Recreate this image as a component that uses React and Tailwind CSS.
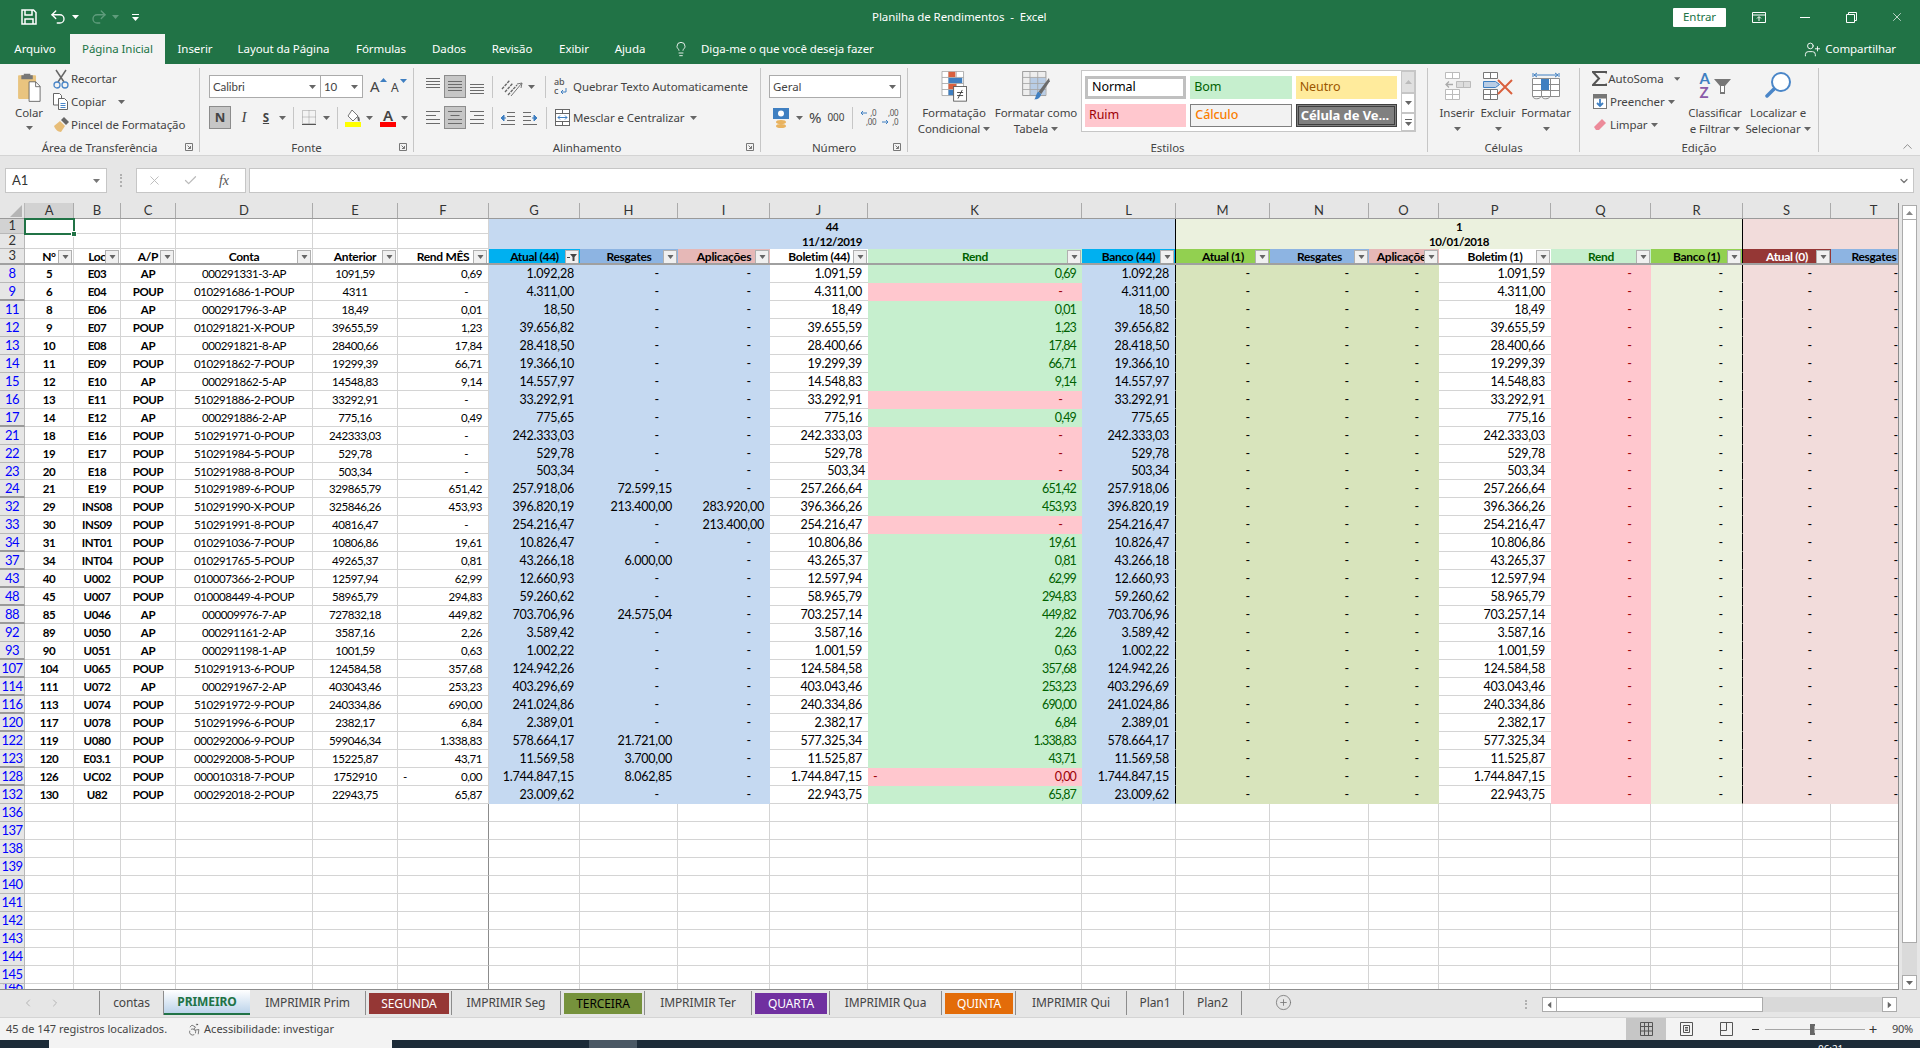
import React from 'react';
import clsx from 'clsx';
import { Undo2, Redo2, Lightbulb, UserPlus, X, Check, ChevronDown, ChevronUp, CirclePlus, Accessibility, ChevronLeft, ChevronRight } from 'lucide-react';

const W = {
  A: 'w-[49px]', B: 'w-[47px]', C: 'w-[55px]', D: 'w-[137px]', E: 'w-[85px]', F: 'w-[91px]',
  G: 'w-[91px]', H: 'w-[98px]', I: 'w-[92px]', J: 'w-[98px]', K: 'w-[214px]', L: 'w-[94px]',
  M: 'w-[94px]', N: 'w-[99px]', O: 'w-[70px]', P: 'w-[112px]', Q: 'w-[100px]', R: 'w-[92px]',
  S: 'w-[88px]', T: 'w-[86px]',
};
const COLS = Object.keys(W);

// row, n, loc, a/p, conta, anterior, rend mes, atual, resgates, aplicacoes, boletim, rend, banco
const DATA = [
  [8, 5, 'E03', 'AP', '000291331-3-AP', '1091,59', '0,69', '1.092,28', '-', '-', '1.091,59', '0,69', '1.092,28'],
  [9, 6, 'E04', 'POUP', '010291686-1-POUP', '4311', '-', '4.311,00', '-', '-', '4.311,00', '-', '4.311,00'],
  [11, 8, 'E06', 'AP', '000291796-3-AP', '18,49', '0,01', '18,50', '-', '-', '18,49', '0,01', '18,50'],
  [12, 9, 'E07', 'POUP', '010291821-X-POUP', '39655,59', '1,23', '39.656,82', '-', '-', '39.655,59', '1,23', '39.656,82'],
  [13, 10, 'E08', 'AP', '000291821-8-AP', '28400,66', '17,84', '28.418,50', '-', '-', '28.400,66', '17,84', '28.418,50'],
  [14, 11, 'E09', 'POUP', '010291862-7-POUP', '19299,39', '66,71', '19.366,10', '-', '-', '19.299,39', '66,71', '19.366,10'],
  [15, 12, 'E10', 'AP', '000291862-5-AP', '14548,83', '9,14', '14.557,97', '-', '-', '14.548,83', '9,14', '14.557,97'],
  [16, 13, 'E11', 'POUP', '510291886-2-POUP', '33292,91', '-', '33.292,91', '-', '-', '33.292,91', '-', '33.292,91'],
  [17, 14, 'E12', 'AP', '000291886-2-AP', '775,16', '0,49', '775,65', '-', '-', '775,16', '0,49', '775,65'],
  [21, 18, 'E16', 'POUP', '510291971-0-POUP', '242333,03', '-', '242.333,03', '-', '-', '242.333,03', '-', '242.333,03'],
  [22, 19, 'E17', 'POUP', '510291984-5-POUP', '529,78', '-', '529,78', '-', '-', '529,78', '-', '529,78'],
  [23, 20, 'E18', 'POUP', '510291988-8-POUP', '503,34', '-', '503,34', '-', '-', '503,34', '-', '503,34'],
  [24, 21, 'E19', 'POUP', '510291989-6-POUP', '329865,79', '651,42', '257.918,06', '72.599,15', '-', '257.266,64', '651,42', '257.918,06'],
  [32, 29, 'INS08', 'POUP', '510291990-X-POUP', '325846,26', '453,93', '396.820,19', '213.400,00', '283.920,00', '396.366,26', '453,93', '396.820,19'],
  [33, 30, 'INS09', 'POUP', '510291991-8-POUP', '40816,47', '-', '254.216,47', '-', '213.400,00', '254.216,47', '-', '254.216,47'],
  [34, 31, 'INT01', 'POUP', '010291036-7-POUP', '10806,86', '19,61', '10.826,47', '-', '-', '10.806,86', '19,61', '10.826,47'],
  [37, 34, 'INT04', 'POUP', '010291765-5-POUP', '49265,37', '0,81', '43.266,18', '6.000,00', '-', '43.265,37', '0,81', '43.266,18'],
  [43, 40, 'U002', 'POUP', '010007366-2-POUP', '12597,94', '62,99', '12.660,93', '-', '-', '12.597,94', '62,99', '12.660,93'],
  [48, 45, 'U007', 'POUP', '010008449-4-POUP', '58965,79', '294,83', '59.260,62', '-', '-', '58.965,79', '294,83', '59.260,62'],
  [88, 85, 'U046', 'AP', '000009976-7-AP', '727832,18', '449,82', '703.706,96', '24.575,04', '-', '703.257,14', '449,82', '703.706,96'],
  [92, 89, 'U050', 'AP', '000291161-2-AP', '3587,16', '2,26', '3.589,42', '-', '-', '3.587,16', '2,26', '3.589,42'],
  [93, 90, 'U051', 'AP', '000291198-1-AP', '1001,59', '0,63', '1.002,22', '-', '-', '1.001,59', '0,63', '1.002,22'],
  [107, 104, 'U065', 'POUP', '510291913-6-POUP', '124584,58', '357,68', '124.942,26', '-', '-', '124.584,58', '357,68', '124.942,26'],
  [114, 111, 'U072', 'AP', '000291967-2-AP', '403043,46', '253,23', '403.296,69', '-', '-', '403.043,46', '253,23', '403.296,69'],
  [116, 113, 'U074', 'POUP', '510291972-9-POUP', '240334,86', '690,00', '241.024,86', '-', '-', '240.334,86', '690,00', '241.024,86'],
  [120, 117, 'U078', 'POUP', '510291996-6-POUP', '2382,17', '6,84', '2.389,01', '-', '-', '2.382,17', '6,84', '2.389,01'],
  [122, 119, 'U080', 'POUP', '000292006-9-POUP', '599046,34', '1.338,83', '578.664,17', '21.721,00', '-', '577.325,34', '1.338,83', '578.664,17'],
  [123, 120, 'E03.1', 'POUP', '000292008-5-POUP', '15225,87', '43,71', '11.569,58', '3.700,00', '-', '11.525,87', '43,71', '11.569,58'],
  [128, 126, 'UC02', 'POUP', '000010318-7-POUP', '1752910', '0,00', '1.744.847,15', '8.062,85', '-', '1.744.847,15', '0,00', '1.744.847,15'],
  [132, 130, 'U82', 'POUP', '000292018-2-POUP', '22943,75', '65,87', '23.009,62', '-', '-', '22.943,75', '65,87', '23.009,62'],
];

const HEADERS = [
  ['A', 'N°', 'bg-white border-r border-[#d4d4d4] text-black'],
  ['B', 'Loc', 'bg-white border-r border-[#d4d4d4] text-black'],
  ['C', 'A/P', 'bg-white border-r border-[#d4d4d4] text-black'],
  ['D', 'Conta', 'bg-white border-r border-[#d4d4d4] text-black'],
  ['E', 'Anterior', 'bg-white border-r border-[#d4d4d4] text-black'],
  ['F', 'Rend MÊS', 'bg-white border-r border-[#d4d4d4] text-black'],
  ['G', 'Atual (44)', 'bg-[#00b0f0] text-black'],
  ['H', 'Resgates', 'bg-[#8db4e2] text-black'],
  ['I', 'Aplicações', 'bg-[#e6b8b7] text-black'],
  ['J', 'Boletim (44)', 'bg-white text-black'],
  ['K', 'Rend', 'bg-[#c6efce] text-[#006100]'],
  ['L', 'Banco (44)', 'bg-[#00b0f0] text-black border-r border-black'],
  ['M', 'Atual (1)', 'bg-[#92d050] text-black'],
  ['N', 'Resgates', 'bg-[#8db4e2] text-black'],
  ['O', 'Aplicações', 'bg-[#e6b8b7] text-black'],
  ['P', 'Boletim (1)', 'bg-white text-black'],
  ['Q', 'Rend', 'bg-[#c6efce] text-[#006100]'],
  ['R', 'Banco (1)', 'bg-[#92d050] text-black border-r border-black'],
  ['S', 'Atual (0)', 'bg-[#953735] text-white'],
  ['T', 'Resgates', 'bg-[#8db4e2] text-black'],
];

const cellFont = "font-['Lato',sans-serif] text-[12.5px] tracking-[-0.22px] text-black";
const smallFont = "font-['Lato',sans-serif] text-[11.5px] tracking-[-0.42px] text-black";
const rendFont = "font-['Lato',sans-serif] text-[12.5px] tracking-[-0.85px]";

const Caret = ({ className, fill = '#666' }) => (
  <svg width="7" height="4" viewBox="0 0 7 4" className={className}><path d="M0 0h7L3.5 4z" fill={fill} /></svg>
);

const Launcher = () => (
  <svg width="8" height="8" viewBox="0 0 8 8" className="absolute right-[6px] bottom-[1px]" fill="none" stroke="#777">
    <path d="M.5 7.5v-7h7v7z" /><path d="M2.5 2.5l3 3M3 5.5h2.5V3" />
  </svg>
);

const Group = ({ className, label, launcher, children }) => (
  <div className={clsx('relative h-[84px] mt-[4px] shrink-0 border-r border-[#c6c6c6] flex flex-col', className)}>
    <div className="h-[75px]">{children}</div>
    <div className="h-[9px] leading-[9px] text-center">{label}</div>
    {launcher && <Launcher />}
  </div>
);

// ribbon icons
const SaveIcon = () => (
  <svg width="16" height="16" viewBox="0 0 16 16" fill="none" stroke="#fff" strokeWidth="1.5">
    <path d="M1 1h11.5L15 3.5V15H1z" /><path d="M4 1v5h7V1" /><path d="M4 15v-5h8v5" />
  </svg>
);
const PasteIcon = () => (
  <svg width="29" height="31" viewBox="0 0 30 38">
    <rect x="1" y="4" width="22" height="29" rx="1" fill="#e9c47f" />
    <path d="M8 4V2h8v2h3v5H5V4z" fill="#777" />
    <path d="M14.5 12h8l5.5 5.500V36H14.500z" fill="#fff" stroke="#555" />
    <path d="M22.500 12v6h5.500" fill="none" stroke="#555" />
  </svg>
);
const ScissorsIcon = () => (
  <svg width="16" height="20" viewBox="0 0 16 20" fill="none">
    <path d="M3 1l8 12M13 1L5 13" stroke="#666" strokeWidth="1.5" />
    <circle cx="4" cy="16" r="3" stroke="#4a86c8" strokeWidth="1.3" />
    <circle cx="12" cy="16" r="3" stroke="#4a86c8" strokeWidth="1.3" />
  </svg>
);
const CopyIcon = () => (
  <svg width="16" height="17" viewBox="0 0 16 17" fill="#fff" stroke="#666">
    <path d="M.5.500h6l2 2V12H.500z" /><path d="M5.500 5.500h6l3 3v8h-9z" />
    <path d="M7.500 10.500h5M7.500 12.500h5M7.500 14.500h5" stroke="#4a86c8" />
  </svg>
);
const PainterIcon = () => (
  <svg width="17" height="17" viewBox="0 0 17 17">
    <path d="M7 5l5 5-4 6c-3 0-6-3-7-6z" fill="#e7bd78" />
    <path d="M8 4l5 5 3-3-5-5z" fill="#666" />
  </svg>
);
const AlignRows = ({ widths = [14, 14, 14], align = 'left', gap = 2 }) => (
  <svg width="16" height={gap * 2 + 12} viewBox={`0 0 16 ${gap * 2 + 12}`} stroke="#6b6b6b">
    {[0, 1, 2, 3].map(i => {
      const w = widths[i % 3];
      const x = align === 'left' ? 1 : align === 'right' ? 15 - w : 8 - w / 2;
      return <path key={i} d={`M${x} ${i * (gap + 2) + 1.5}h${w}`} />;
    })}
  </svg>
);
const FillIcon = () => (
  <div className="flex flex-col items-center w-[16px]">
    <svg width="14" height="14" viewBox="0 0 14 14" fill="none" stroke="#777"><path d="M6 1l6 6-5 5-5-5z" fill="#fff" /><path d="M12 8c1 2 1 3 .5 4" stroke="#666" strokeWidth="2" /></svg>
    <div className="w-[16px] h-[5px] bg-[#ffff00] -mt-[1px]" />
  </div>
);
const BordersIcon = () => (
  <svg width="14" height="15" viewBox="0 0 14 15" fill="none" stroke="#999" strokeDasharray="1 1">
    <path d="M.5.500h13v13h-13zM7 .500v13M.500 7h13" /><path d="M0 14.500h14" stroke="#555" strokeDasharray="none" />
  </svg>
);
const WrapIcon = () => (
  <div className="relative w-[15px] h-[20px] text-[9px] leading-[9px] text-[#555] font-medium">
    <div>ab</div>
    <div>c</div>
    <svg width="8" height="8" viewBox="0 0 8 8" className="absolute left-[6px] top-[10px]" fill="none" stroke="#3f7fc1"><path d="M6 1v4H1M3 3L1 5l2 2" /></svg>
  </div>
);
const MergeIcon = () => (
  <svg width="15" height="17" viewBox="0 0 15 17" fill="#fff" stroke="#666">
    <rect x=".5" y=".5" width="14" height="16" /><path d="M.500 4.500h14M.500 12.500h14M7.500.500v4M7.500 12.500v4" />
    <path d="M3 8.500h9M3 8.500l2-2M3 8.500l2 2M12 8.500l-2-2M12 8.500l-2 2" stroke="#3f7fc1" fill="none" />
  </svg>
);
const OrientIcon = () => (
  <svg width="24" height="20" viewBox="0 0 24 20" fill="none" stroke="#666">
    <path d="M2 12l8-9M5 15l8-9M8 18l9-10" strokeWidth="1.300" strokeDasharray="3 1" />
    <path d="M11 19L22 6M22 6l-5 1M22 6l-1 5" stroke="#777" />
  </svg>
);
const IndentIcon = ({ flip }) => (
  <svg width="16" height="16" viewBox="0 0 16 16" fill="none" className={flip ? '-scale-x-100' : ''}>
    <path d="M7 2.500h8M7 6.500h8M7 10.500h8M1 14.500h14" stroke="#6b6b6b" />
    <path d="M1 8h5M1 8l3-3v6z" stroke="#3f7fc1" fill="#3f7fc1" />
  </svg>
);
const CurrencyIcon = () => (
  <svg width="18" height="22" viewBox="0 0 18 22">
    <rect x="1" y="1" width="16" height="11" fill="#3f7fc1" />
    <circle cx="9" cy="6.500" r="3" fill="#fff" />
    <ellipse cx="9" cy="15" rx="5" ry="2" fill="#e9b35f" />
    <ellipse cx="9" cy="19" rx="5" ry="2" fill="#e9b35f" />
  </svg>
);
const DecIcon = ({ top, bottom, flip }) => (
  <div className="relative w-[16px] h-[20px] text-[8px] leading-[9px] text-[#555] text-right tracking-[-0.3px]">
    <div>{top}</div>
    <div>{bottom}</div>
    <svg width="7" height="6" viewBox="0 0 7 6" className={clsx('absolute left-0', flip ? 'top-[11px] -scale-x-100' : 'top-[2px]')} fill="none" stroke="#3f7fc1"><path d="M7 3H1M3 1L1 3l2 2" /></svg>
  </div>
);
const CondIcon = () => (
  <svg width="27" height="31" viewBox="0 0 30 36">
    <path d="M.5.5h25v28h-25zM.5 7.500h25M.5 14.500h25M.5 21.500h25M8.500.500v28M17 .500v28" fill="#fff" stroke="#a6a6a6" />
    <rect x="8" y="1" width="8" height="6" fill="#d9603e" />
    <rect x="8" y="8" width="16" height="6" fill="#3f7fc1" />
    <rect x="8" y="15" width="9" height="6" fill="#d9603e" />
    <rect x="8" y="22" width="6" height="6" fill="#3f7fc1" />
    <rect x="14" y="18" width="15" height="17" fill="#fff" stroke="#555" />
    <path d="M18 25h7M18 28.500h7M24 22l-5 10" stroke="#333" fill="none" />
  </svg>
);
const TableIcon = () => (
  <svg width="28" height="31" viewBox="0 0 32 36">
    <path d="M.5.500h27v28h-27z" fill="#eee" stroke="#8c8c8c" />
    <rect x="9" y="8" width="18" height="20" fill="#b9cde5" />
    <path d="M.500 7.500h27M.500 14.500h27M.500 21.500h27M9 .500v28M18 .500v28" stroke="#a6a6a6" fill="none" />
    <path d="M31 8L19 24l3 3L32 12z" fill="#6b6b6b" />
    <path d="M19 24l3 3c-1 5-5 6-8 6 2-2 2-8 5-9z" fill="#3f7fc1" />
  </svg>
);
const InsertIcon = () => (
  <svg width="27" height="30" viewBox="0 0 27 30" fill="#fff" stroke="#bbb">
    <path d="M1.500 1.500h14v6h-14zM8.500 1.500v6M1.500 18.500h14v10h-14zM1.500 23.500h14M8.500 18.500v10" />
    <path d="M12.500 10.500h14v6h-14zM19.500 10.500v6" fill="#ddd" />
    <path d="M9 13.500H2m3-3l-3 3 3 3" fill="none" stroke="#aaa" strokeWidth="1.300" />
  </svg>
);
const DeleteIcon = () => (
  <svg width="30" height="30" viewBox="0 0 30 30" fill="#fff" stroke="#777">
    <path d="M.500 1.500h14v6h-14zM7.500 1.500v6M.500 18.500h14v10h-14zM.500 23.500h14M7.500 18.500v10" />
    <path d="M.500 10.500h12l4 3-4 3h-12z" fill="#b9cde5" stroke="#3f7fc1" />
    <path d="M15 9l14 14M29 9L15 23" stroke="#d9603e" strokeWidth="2" />
  </svg>
);
const FormatIcon = () => (
  <svg width="28" height="30" viewBox="0 0 28 30" fill="#fff" stroke="#8c8c8c">
    <path d="M.500 7.500h27v18h-27zM.500 13.500h27M.500 19.500h27M9.500 7.500v18M18.500 7.500v18" />
    <rect x="9" y="8" width="8" height="11" fill="#3f7fc1" stroke="none" />
    <path d="M1 2v4M27 2v4M2 4h24M2 4l3-2M2 4l3 2M26 4l-3-2M26 4l-3 2" stroke="#3f7fc1" fill="none" />
    <path d="M1 25.500c0 3 7 3 8 0M10 25.500c0 3 7 3 8 0" fill="none" />
  </svg>
);
const SigmaIcon = () => (
  <svg width="15" height="15" viewBox="0 0 15 15" fill="none" stroke="#555" strokeWidth="2"><path d="M14.500 2.500V1H1l6 6.500L1 14h13.500v-1.500" /></svg>
);
const DownFillIcon = () => (
  <svg width="14" height="15" viewBox="0 0 14 15" fill="#fff" stroke="#777">
    <rect x=".5" y=".5" width="13" height="14" /><rect x="1" y="1" width="12" height="3" fill="#777" />
    <path d="M7 5v7M4 9l3 3 3-3" stroke="#3f7fc1" strokeWidth="1.800" fill="none" />
  </svg>
);
const EraserIcon = () => (
  <svg width="14" height="13" viewBox="0 0 14 13"><path d="M9 1l4 4-7 7H3L1 9z" fill="#ec8a99" /></svg>
);
const SortIcon = () => (
  <div className="relative w-[31px] h-[30px] font-['Lato'] font-bold text-[15px] leading-[14px]">
    <div className="text-[#3f7fc1]">A</div>
    <div className="text-[#8a5aa8]">Z</div>
    <svg width="17" height="15" viewBox="0 0 17 15" className="absolute left-[14px] top-[8px]"><path d="M0 0h17l-6 7v8H6V7z" fill="#777" /><path d="M7 7h3v6H7z" fill="#fff" /></svg>
  </div>
);
const SearchIcon = () => (
  <svg width="27" height="28" viewBox="0 0 27 28" fill="none" stroke="#4a86c8">
    <circle cx="16" cy="11" r="9" strokeWidth="2" fill="#fff" />
    <path d="M9 18l-7 7" strokeWidth="3.500" strokeLinecap="round" />
  </svg>
);

const TOP_TABS = [
  ['Arquivo', 'w-[70px]'], ['Página Inicial', 'w-[95px]'], ['Inserir', 'w-[60px]'], ['Layout da Página', 'w-[117px]'],
  ['Fórmulas', 'w-[78px]'], ['Dados', 'w-[58px]'], ['Revisão', 'w-[68px]'], ['Exibir', 'w-[56px]'], ['Ajuda', 'w-[56px]'],
];

const TitleBar = () => (
  <div className="h-[64px] shrink-0 bg-[#217346] text-white">
    <div className="h-[34px] flex items-center">
      <div className="w-[872px] shrink-0 flex items-center">
        <div className="ml-[21px]"><SaveIcon /></div>
        <Undo2 size={18} strokeWidth={1.800} className="ml-[12px]" />
        <Caret fill="#fff" className="ml-[5px]" />
        <Redo2 size={18} strokeWidth={1.800} className="ml-[11px] text-[#5f9c7c]" />
        <Caret fill="#5f9c7c" className="ml-[4px]" />
        <div className="ml-[13px] flex flex-col items-center gap-[2px]">
          <div className="w-[7px] h-[1px] bg-white" /><Caret fill="#fff" />
        </div>
      </div>
      <div className="whitespace-pre">Planilha de Rendimentos  -  Excel</div>
      <div className="ml-auto w-[53px] h-[19px] bg-white rounded-[1px] text-[#217346] flex items-center justify-center">Entrar</div>
      <svg width="14" height="11" viewBox="0 0 14 11" fill="none" stroke="#fff" className="ml-[26px]"><path d="M.500.500h13v10h-13zM.500 3h13M7 9V5M5 6.500L7 4.500l2 2" /></svg>
      <div className="ml-[34px] w-[10px] h-[1px] bg-white" />
      <svg width="11" height="11" viewBox="0 0 11 11" fill="none" stroke="#fff" className="ml-[36px]"><path d="M.500 2.500h8v8h-8zM2.500 2.500v-2h8v8h-2" /></svg>
      <X size={14} strokeWidth={1.200} className="ml-[33px] mr-[16px]" />
    </div>
    <div className="h-[30px] flex">
      {TOP_TABS.map(([t, w]) => (
        <div key={t} className={clsx(w, 'flex items-center justify-center shrink-0', t === 'Página Inicial' && 'bg-[#f3f3f3] text-[#217346]')}>{t}</div>
      ))}
      <div className="flex items-center ml-[15px]">
        <Lightbulb size={16} strokeWidth={1.300} />
        <span className="ml-[12px]">Diga-me o que você deseja fazer</span>
      </div>
      <div className="ml-auto flex items-center pr-[24px]">
        <UserPlus size={17} strokeWidth={1.300} className="mr-[4px]" />
        Compartilhar
      </div>
    </div>
  </div>
);

const Sep = ({ className }) => <div className={clsx('w-px h-[22px] bg-[#c6c6c6]', className)} />;

const Combo = ({ className, children }) => (
  <div className={clsx('h-[23px] bg-white border border-[#ababab] flex items-center justify-between pl-[3px] pr-[4px]', className)}>
    {children}<Caret />
  </div>
);

const SmallRow = ({ icon, label, caret, caretGap = 'ml-[1px]' }) => (
  <div className="h-[23px] flex items-center whitespace-nowrap">
    <div className="w-[18px] flex justify-center">{icon}</div>
    <span className="ml-[1px]">{label}</span>
    {caret && <Caret className={caretGap} />}
  </div>
);

const BigButton = ({ className, icon, lines, caretInline }) => (
  <div className={clsx('flex flex-col items-center leading-[16px] whitespace-nowrap', className)}>
    <div className="h-[34px] flex items-start justify-center mt-[3px]">{icon}</div>
    {lines.map((l, i) => (
      <div key={l} className="flex items-center">
        {l}{caretInline && i === lines.length - 1 && <Caret className="ml-[3px]" />}
      </div>
    ))}
    {!caretInline && <div className="h-[16px] flex items-center"><Caret /></div>}
  </div>
);

const GalleryCell = ({ className, children }) => (
  <div className={clsx('h-[23px] flex items-center px-[4px] text-[12.5px]', className)}>{children}</div>
);

const Ribbon = () => (
  <div className="relative h-[92px] shrink-0 bg-[#f3f3f3] border-b border-[#d4d4d4] flex text-[#444]">
    <Group className="w-[200px]" label="Área de Transferência" launcher>
      <div className="flex">
        <div className="w-[52px] pl-[6px] flex flex-col items-center leading-[16px]">
          <div className="mt-[4px] h-[33px]"><PasteIcon /></div>
          <div className="h-[16px]">Colar</div>
          <Caret className="mt-[5px]" />
        </div>
        <div className="flex flex-col -mt-[1px]">
          <SmallRow icon={<ScissorsIcon />} label="Recortar" />
          <SmallRow icon={<CopyIcon />} label="Copiar" caret caretGap="ml-[12px]" />
          <SmallRow icon={<PainterIcon />} label="Pincel de Formatação" />
        </div>
      </div>
    </Group>

    <Group className="w-[214px]" label="Fonte" launcher>
      <div className="pt-[7px] pl-[9px]">
        <div className="flex items-center">
          <Combo className="w-[112px] font-['Lato']">Calibri</Combo>
          <Combo className="w-[43px] -ml-px font-['Lato']">10</Combo>
          <div className="ml-[7px] w-[18px] relative text-[15px] leading-none">A<Caret fill="#3f7fc1" className="absolute right-[1px] top-[-1px] rotate-180" /></div>
          <div className="ml-[3px] w-[18px] relative text-[12px] leading-none mt-[2px]">A<Caret fill="#3f7fc1" className="absolute right-[2px] top-[-3px]" /></div>
        </div>
        <div className="flex items-center mt-[8px]">
          <div className="w-[22px] h-[23px] bg-[#c6c6c6] border border-[#8c8c8c] flex items-center justify-center font-bold text-[13px]">N</div>
          <div className="ml-[5px] w-[16px] text-center italic font-['Liberation_Serif'] text-[15px]">I</div>
          <div className="ml-[6px] w-[16px] text-center underline font-bold">S</div>
          <Caret className="ml-[5px]" />
          <Sep className="ml-[7px]" />
          <div className="ml-[8px]"><BordersIcon /></div>
          <Caret className="ml-[7px]" />
          <Sep className="ml-[7px]" />
          <div className="ml-[7px]"><FillIcon /></div>
          <Caret className="ml-[5px]" />
          <div className="ml-[7px] w-[16px] flex flex-col items-center leading-[13px] text-[15px] font-semibold">A<div className="w-[16px] h-[5px] bg-[#ff0000]" /></div>
          <Caret className="ml-[5px]" />
        </div>
      </div>
    </Group>

    <Group className="w-[347px]" label="Alinhamento" launcher>
      <div className="pt-[7px] pl-[11px]">
        <div className="flex items-center h-[23px]">
          <div className="self-start mt-[2px]"><AlignRows widths={[14, 14, 14]} gap={1} /></div>
          <div className="ml-[3px] w-[22px] h-[23px] bg-[#c6c6c6] border border-[#8c8c8c] flex items-center justify-center"><AlignRows gap={1} /></div>
          <div className="ml-[3px] self-end mb-[1px]"><AlignRows gap={1} /></div>
          <Sep className="ml-[7px]" />
          <div className="ml-[7px]"><OrientIcon /></div>
          <Caret className="ml-[4px]" />
          <Sep className="ml-[10px]" />
          <div className="ml-[8px]"><WrapIcon /></div>
          <span className="ml-[4px] whitespace-nowrap">Quebrar Texto Automaticamente</span>
        </div>
        <div className="flex items-center h-[23px] mt-[8px]">
          <AlignRows widths={[14, 10, 14]} />
          <div className="ml-[3px] w-[22px] h-[23px] bg-[#c6c6c6] border border-[#8c8c8c] flex items-center justify-center"><AlignRows widths={[14, 9, 14]} align="center" /></div>
          <div className="ml-[3px]"><AlignRows widths={[14, 10, 14]} align="right" /></div>
          <Sep className="ml-[7px]" />
          <div className="ml-[7px]"><IndentIcon /></div>
          <div className="ml-[6px]"><IndentIcon flip /></div>
          <Sep className="ml-[8px]" />
          <div className="ml-[8px]"><MergeIcon /></div>
          <span className="ml-[3px] whitespace-nowrap">Mesclar e Centralizar</span>
          <Caret className="ml-[6px]" />
        </div>
      </div>
    </Group>

    <Group className="w-[147px]" label="Número" launcher>
      <div className="pt-[7px] pl-[8px]">
        <Combo className="w-[132px]">Geral</Combo>
        <div className="flex items-center h-[23px] mt-[8px]">
          <div className="ml-[3px]"><CurrencyIcon /></div>
          <Caret className="ml-[6px]" />
          <span className="ml-[6px] text-[15px] leading-none">%</span>
          <span className="ml-[6px] text-[10px]">000</span>
          <Sep className="ml-[8px]" />
          <div className="ml-[7px]"><DecIcon top=",0" bottom=",00" /></div>
          <div className="ml-[6px]"><DecIcon top=",00" bottom=",0" flip /></div>
        </div>
      </div>
    </Group>

    <Group className="w-[520px]" label="Estilos">
      <div className="flex">
        <BigButton className="w-[82px] ml-[5px]" icon={<CondIcon />} lines={['Formatação', 'Condicional']} caretInline />
        <BigButton className="w-[82px]" icon={<TableIcon />} lines={['Formatar como', 'Tabela']} caretInline />
        <div className="ml-[4px] mt-[2px] w-[335px] h-[62px] bg-white border border-[#c6c6c6] flex">
          <div className="flex-1 min-w-0 grid grid-cols-3 content-start gap-x-[4px] gap-y-[5px] pt-[5px] pl-[3px] pr-[4px]">
            <GalleryCell className="bg-white text-black outline-[3px] outline-[#c0c0c0] -outline-offset-[3px] px-[7px]">Normal</GalleryCell>
            <GalleryCell className="bg-[#c6efce] text-[#006100]">Bom</GalleryCell>
            <GalleryCell className="bg-[#ffeb9c] text-[#9c5700]">Neutro</GalleryCell>
            <GalleryCell className="bg-[#ffc7ce] text-[#9c0006]">Ruim</GalleryCell>
            <GalleryCell className="bg-[#f2f2f2] border border-[#7f7f7f] text-[#fa7d00] font-medium">Cálculo</GalleryCell>
            <GalleryCell className="border-[3px] border-double border-[#3f3f3f] text-white font-bold !px-[2px] !text-[13px] whitespace-nowrap overflow-hidden bg-[#808080]">Célula de Ve...</GalleryCell>
          </div>
          <div className="w-[14px] shrink-0 flex flex-col">
            <div className="h-[22px] bg-[#e0e0e0] border border-[#c6c6c6] flex items-center justify-center"><Caret fill="#bbb" className="rotate-180" /></div>
            <div className="h-[20px] bg-white border border-[#c6c6c6] flex items-center justify-center"><Caret /></div>
            <div className="h-[18px] bg-white border border-[#c6c6c6] flex flex-col items-center justify-center gap-[2px]"><div className="w-[7px] h-px bg-[#666]" /><Caret /></div>
          </div>
        </div>
      </div>
    </Group>

    <Group className="w-[152px]" label="Células">
      <div className="flex pl-[9px]">
        <BigButton className="w-[40px]" icon={<InsertIcon />} lines={['Inserir']} />
        <BigButton className="w-[42px]" icon={<DeleteIcon />} lines={['Excluir']} />
        <BigButton className="w-[54px]" icon={<FormatIcon />} lines={['Formatar']} />
      </div>
    </Group>

    <Group className="w-[239px]" label="Edição">
      <div className="flex">
        <div className="w-[100px] pl-[11px] flex flex-col -mt-[1px]">
          <SmallRow icon={<SigmaIcon />} label="AutoSoma" caret caretGap="ml-[10px]" />
          <SmallRow icon={<DownFillIcon />} label="Preencher" caret caretGap="ml-[3px]" />
          <SmallRow icon={<EraserIcon />} label="Limpar" caret caretGap="ml-[3px]" />
        </div>
        <BigButton className="w-[70px]" icon={<SortIcon />} lines={['Classificar', 'e Filtrar']} caretInline />
        <BigButton className="w-[56px]" icon={<SearchIcon />} lines={['Localizar e', 'Selecionar']} caretInline />
      </div>
    </Group>

    <ChevronUp size={15} strokeWidth={1} className="absolute right-[5px] bottom-[1px] text-[#555]" />
  </div>
);

const FormulaBar = () => (
  <div className="h-[47px] shrink-0 bg-[#e6e6e6] flex items-center pt-[2px]">
    <div className="ml-[5px] w-[102px] h-[25px] bg-white border border-[#c6c6c6] flex items-center justify-between pl-[6px] pr-[6px] font-['Lato'] text-[13px] text-[#333]">
      A1<Caret fill="#777" />
    </div>
    <div className="ml-[13px] w-[3px] h-[13px] border-l-2 border-dotted border-[#b0b0b0]" />
    <div className="ml-[13px] w-[110px] h-[25px] bg-white border border-[#c6c6c6] flex items-center">
      <X size={15} strokeWidth={1.500} className="ml-[10px] text-[#bbb]" />
      <Check size={15} strokeWidth={2} className="ml-[21px] text-[#bbb]" />
      <span className="ml-[21px] italic font-['Liberation_Serif'] text-[14px] text-[#555]">fx</span>
    </div>
    <div className="ml-[3px] w-[1665px] h-[25px] bg-white border border-[#c6c6c6] flex items-center justify-end pr-[3px]">
      <ChevronDown size={12} strokeWidth={2.500} className="text-[#777]" />
    </div>
  </div>
);

const FilterBtn = ({ active }) => (
  <div className="absolute right-[1px] top-[1px] w-[14px] h-[14px] bg-[#f0f0f0] border border-[#b0b0b0] flex items-center justify-center">
    {active ? (
      <svg width="10" height="7" viewBox="0 0 10 7"><path d="M3 0h7L7.500 3v4h-2V3z" fill="#444" /><path d="M0 3.500h3" stroke="#444" /></svg>
    ) : <Caret fill="#666" className="scale-x-90" />}
  </div>
);

const RowHead = ({ n, className, active }) => (
  <div className={clsx("w-[25px] shrink-0 h-full border-r border-b border-[#b8b8b8] flex items-center justify-center font-['Lato'] text-[13px] tracking-[-0.5px]", active ? 'bg-[#d2d2d2]' : 'bg-[#e6e6e6]', className)}>{n}</div>
);

const noLine = 'border-b border-transparent';
const gridB = 'border-b border-[#d4d4d4]';
const gridRB = 'border-r border-b border-[#d4d4d4]';
const blackR = 'border-r border-b border-r-black border-b-transparent';

const Num = ({ col, children, bg, pr = 'pr-[6px]', font = cellFont, color, borders = noLine, left }) => (
  <div className={clsx('relative shrink-0 h-full pt-[1px] flex items-center justify-end overflow-hidden whitespace-nowrap', W[col], bg, pr, font, borders, color)}>
    {left && <span className="absolute left-[5px]">-</span>}
    {children}
  </div>
);

const Dash = ({ col, bg, color, pr = 'pr-[19px]', borders }) => (
  <Num col={col} bg={bg} pr={pr} color={color} borders={borders}>-</Num>
);

const DataRow = ({ d, next }) => {
  const [row, n, loc, ap, conta, ant, rendM, atual, resg, apl, bol, rend, banco] = d;
  const bad = rend === '-' || rend === '0,00';
  const rendBg = bad ? 'bg-[#ffc7ce]' : 'bg-[#c6efce]';
  const rendColor = bad ? 'text-[#9c0006]' : 'text-[#006100]';
  const gapAfter = next && next !== row + 1;
  const center = 'shrink-0 h-full pt-[1px] flex items-center justify-center whitespace-nowrap overflow-hidden ' + gridRB;
  const blue = 'bg-[#c5d9f1]';
  return (
    <div className={clsx('flex shrink-0', row === 23 ? 'h-[17px]' : 'h-[18px]')}>
      <RowHead n={row} className={clsx('text-[#0000ff] pt-[1px]', gapAfter && 'border-b-2 !border-b-[#9a9a9a]')} />
      <div className={clsx(center, W.A, smallFont, 'font-bold')}>{n}</div>
      <div className={clsx(center, W.B, smallFont, 'font-bold')}>{loc}</div>
      <div className={clsx(center, W.C, smallFont, 'font-bold')}>{ap}</div>
      <div className={clsx(center, W.D, smallFont)}>{conta}</div>
      <div className={clsx(center, W.E, smallFont)}>{ant}</div>
      {rendM === '-'
        ? <Num col="F" font={smallFont} pr="pr-[20px]" borders={gridRB}>-</Num>
        : <Num col="F" font={smallFont} pr="pr-[6px]" borders={gridRB} left={row === 128}>{rendM}</Num>}
      <Num col="G" bg={blue}>{atual}</Num>
      {resg === '-' ? <Dash col="H" bg={blue} /> : <Num col="H" bg={blue}>{resg}</Num>}
      {apl === '-' ? <Dash col="I" bg={blue} /> : <Num col="I" bg={blue}>{apl}</Num>}
      <Num col="J" bg="bg-white" borders={gridB} pr={row === 23 ? 'pr-[3px]' : 'pr-[6px]'}>{bol}</Num>
      {rend === '-'
        ? <Num col="K" bg={rendBg} font={rendFont} color={rendColor} pr="pr-[20px]">-</Num>
        : <Num col="K" bg={rendBg} font={rendFont} color={rendColor} pr="pr-[6px]" left={row === 128}>{rend}</Num>}
      <Num col="L" bg={blue} borders={blackR}>{banco}</Num>
      <Dash col="M" bg="bg-[#d8e4bc]" pr="pr-[20px]" />
      <Dash col="N" bg="bg-[#d8e4bc]" pr="pr-[20px]" />
      <Dash col="O" bg="bg-[#d8e4bc]" pr="pr-[20px]" />
      <Num col="P" bg="bg-white" borders={gridB}>{bol}</Num>
      <Num col="Q" bg="bg-[#ffc7ce]" font={rendFont} color="text-[#9c0006]" pr="pr-[20px]">-</Num>
      <Dash col="R" bg="bg-[#ebf1de]" borders={blackR} />
      <Dash col="S" bg="bg-[#f2dcdb]" />
      <Dash col="T" bg="bg-[#f2dcdb]" />
    </div>
  );
};

const EmptyRow = ({ n, className = 'h-[18px]' }) => (
  <div className={clsx('flex shrink-0', className)}>
    <RowHead n={n} className="text-[#0000ff] pt-[1px]" />
    {COLS.map(c => (
      <div key={c} className={clsx('shrink-0 h-full', W[c], gridRB, c === 'F' && '!border-r-[#8c8c8c]')} />
    ))}
  </div>
);

const Sheet = () => (
  <div className="h-[787px] shrink-0 flex bg-[#e6e6e6] overflow-hidden">
    <div className="relative w-[1899px] shrink-0 flex flex-col overflow-hidden bg-white border-b border-[#8c8c8c] border-r">
      <div className="flex h-[16px] shrink-0 border-b border-[#9a9a9a]">
        <div className="w-[25px] shrink-0 bg-[#e6e6e6] border-r border-[#b8b8b8] flex items-end justify-end">
          <svg width="12" height="12" viewBox="0 0 12 12" className="mb-[1px] mr-[2px]"><path d="M12 0v12H0z" fill="#b5b5b5" /></svg>
        </div>
        {COLS.map((c, i) => (
          <div key={c} className={clsx(W[c], "shrink-0 border-r border-[#ababab] flex items-center justify-center font-['Lato'] text-[13px] text-[#333]", i === 0 ? 'bg-[#d2d2d2]' : 'bg-[#e6e6e6]')}>{c}</div>
        ))}
      </div>

      {[1, 2].map(n => (
        <div key={n} className="flex shrink-0 h-[15px]">
          <RowHead n={n} className="text-[#333]" active={n === 1} />
          {COLS.slice(0, 6).map(c => <div key={c} className={clsx('shrink-0', W[c], gridRB)} />)}
          <div className={clsx('w-[687px] shrink-0 bg-[#c5d9f1] border-r border-black flex items-center justify-center', smallFont, 'font-bold')}>{n === 1 ? '44' : '11/12/2019'}</div>
          <div className={clsx('w-[567px] shrink-0 bg-[#ebf1de] border-r border-black flex items-center justify-center', smallFont, 'font-bold')}>{n === 1 ? '1' : '10/01/2018'}</div>
          <div className="w-[174px] shrink-0 bg-[#f2dcdb]" />
        </div>
      ))}

      <div className="flex h-[16px] shrink-0 border-b-2 border-[#a0a0a0]">
        <RowHead n={3} className="text-[#333] !border-b-0" />
        {HEADERS.map(([c, t, cls]) => (
          <div key={c} className={clsx(W[c], cls, "relative shrink-0 pt-[1px] flex items-center justify-center whitespace-nowrap overflow-hidden font-['Lato'] font-bold text-[12px] tracking-[-0.3px]")}>
            {t}
            <FilterBtn active={c === 'G'} />
          </div>
        ))}
      </div>

      {DATA.map((d, i) => <DataRow key={d[0]} d={d} next={DATA[i + 1]?.[0]} />)}
      {[136, 137, 138, 139, 140, 141, 142, 143, 144, 145].map(n => <EmptyRow key={n} n={n} />)}
      <EmptyRow n={146} className="h-[6px] overflow-hidden" />

      <div className="absolute left-[24px] top-[15px] w-[51px] h-[17px] border-2 border-[#217346]">
        <div className="absolute right-[-4px] bottom-[-4px] w-[6px] h-[6px] bg-[#217346] border border-white" />
      </div>
    </div>

    <div className="flex-1 pl-[3px] pr-[3px] flex flex-col pt-[2px]">
      <div className="h-[15px] bg-white border border-[#ababab] flex items-center justify-center"><Caret fill="#888" className="rotate-180" /></div>
      <div className="h-[723px] bg-white border border-[#ababab] border-t-0" />
      <div className="h-[32px] bg-[#dadada]" />
      <div className="h-[15px] bg-white border border-[#ababab] flex items-center justify-center"><Caret fill="#666" /></div>
    </div>
  </div>
);

const SHEET_TABS = [
  ['contas', 'w-[64px]'],
  ['PRIMEIRO', 'w-[86px]', 'active'],
  ['IMPRIMIR Prim', 'w-[116px]'],
  ['SEGUNDA', 'w-[86px]', 'bg-[#953735] text-white'],
  ['IMPRIMIR Seg', 'w-[109px]'],
  ['TERCEIRA', 'w-[84px]', 'bg-[#76923c] text-black'],
  ['IMPRIMIR Ter', 'w-[107px]'],
  ['QUARTA', 'w-[78px]', 'bg-[#7030a0] text-white'],
  ['IMPRIMIR Qua', 'w-[112px]'],
  ['QUINTA', 'w-[74px]', 'bg-[#e36c09] text-white'],
  ['IMPRIMIR Qui', 'w-[111px]'],
  ['Plan1', 'w-[57px]'],
  ['Plan2', 'w-[58px]'],
];

const SheetTabs = () => (
  <div className="h-[28px] shrink-0 bg-[#e6e6e6] border-b border-[#d4d4d4] flex items-start text-[12px] tracking-[-0.1px] text-[#444]">
    <div className="w-[100px] h-[24px] mt-[1px] shrink-0 flex items-center border-r border-[#8c8c8c] text-[#b5b5b5]">
      <ChevronLeft size={12} className="ml-[22px]" />
      <ChevronRight size={12} className="ml-[15px]" />
    </div>
    {SHEET_TABS.map(([t, w, c]) => (
      c === 'active' ? (
        <div key={t} className={clsx(w, 'h-[25px] shrink-0 bg-linear-to-b from-white to-[#bcd3ea] border-b-2 border-[#217346] flex items-center justify-center font-bold text-[#217346]')}>{t}</div>
      ) : (
        <div key={t} className={clsx(w, 'relative h-[24px] mt-[1px] shrink-0 flex items-center justify-center border-r border-[#8c8c8c]')}>
          {c ? <div className={clsx('absolute left-[3px] right-[2px] top-[2px] bottom-[1px] flex items-center justify-center', c)}>{t}</div> : t}
        </div>
      )
    ))}
    <CirclePlus size={17} strokeWidth={1.200} className="ml-[33px] mt-[4px] text-[#777]" />
    <div className="ml-[233px] mt-[7px] h-[15px] flex items-stretch">
      <div className="w-[3px] mr-[14px] my-[3px] border-l-2 border-dotted border-[#b0b0b0]" />
      <div className="w-[15px] bg-white border border-[#ababab] flex items-center justify-center"><Caret fill="#666" className="rotate-90" /></div>
      <div className="w-[206px] bg-white border-y border-r border-[#ababab]" />
      <div className="w-[119px] bg-[#d9d9d9]" />
      <div className="w-[15px] bg-white border border-[#ababab] flex items-center justify-center"><Caret fill="#666" className="-rotate-90" /></div>
    </div>
  </div>
);

const StatusBar = () => (
  <div className="h-[22px] shrink-0 bg-[#f3f3f3] flex items-center text-[11px] tracking-normal text-[#444]">
    <span className="ml-[6px]">45 de 147 registros localizados.</span>
    <Accessibility size={15} strokeWidth={1.200} className="ml-[20px] text-[#555]" />
    <span className="ml-[2px]">Acessibilidade: investigar</span>
    <div className="ml-auto flex items-center h-full">
      <div className="w-[40px] h-full bg-[#c6c6c6] flex items-center justify-center">
        <svg width="13" height="14" viewBox="0 0 13 14" fill="none" stroke="#555"><path d="M.500.500h12v13h-12zM.500 4.500h12M.500 9h12M4.500.500v13M8.500.500v13" /></svg>
      </div>
      <svg width="13" height="14" viewBox="0 0 13 14" fill="none" stroke="#555" className="ml-[14px]"><path d="M.500.500h12v13h-12zM3.500 3.500h6v7h-6zM5 5.500h3M5 7h3M5 8.500h3" /></svg>
      <svg width="13" height="14" viewBox="0 0 13 14" fill="none" stroke="#555" className="ml-[27px]"><path d="M.500.500h12v13h-12zM.500 8.500h6V.500" /></svg>
      <div className="ml-[19px] w-[7px] h-px bg-[#333]" />
      <div className="relative ml-[6px] w-[100px] h-px bg-[#a6a6a6]">
        <div className="absolute left-[45px] top-[-5px] w-[5px] h-[11px] bg-[#666]" />
        <div className="absolute left-[49px] top-[-3px] w-px h-[7px] bg-[#a6a6a6]" />
      </div>
      <div className="ml-[3px] w-[10px] text-center text-[15px] leading-none text-[#333]">+</div>
      <span className="ml-[14px] w-[20px] mr-[8px] tracking-[-0.3px] whitespace-nowrap">90%</span>
    </div>
  </div>
);

const Taskbar = () => (
  <div className="h-[8px] shrink-0 bg-[#1c2b38] flex overflow-hidden">
    <div className="ml-[49px] w-[343px] bg-[#f3f3f3]" />
    <div className="ml-[197px] w-[48px] bg-[#4a5864]" />
    <span className="ml-[1181px] pt-[4px] text-[10px] leading-[10px] text-white font-['Noto_Sans']">06:21</span>
  </div>
);

export default function App() {
  return (
    <div className="w-[1920px] h-[1048px] overflow-hidden flex flex-col bg-white font-['Noto_Sans',sans-serif] text-[11.5px] tracking-[-0.08px]">
      <TitleBar />
      <Ribbon />
      <FormulaBar />
      <Sheet />
      <SheetTabs />
      <StatusBar />
      <Taskbar />
    </div>
  );
}
